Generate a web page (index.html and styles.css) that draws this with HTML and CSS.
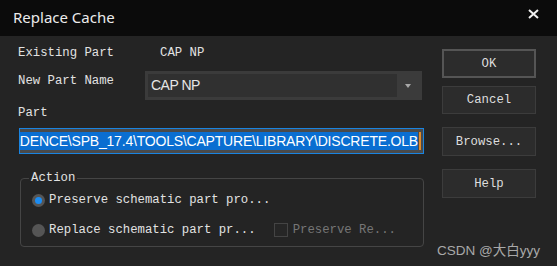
FILE: index.html
```html
<!DOCTYPE html>
<html lang="en">
<head>
    <meta charset="UTF-8">
    <title>Replace Cache</title>
    <link rel="stylesheet" href="styles.css">
</head>
<body>
    <div class="dialog">
        <!-- Barra de titulo -->
        <div class="titlebar">
            <span class="title">Replace Cache</span>
            <svg class="close" width="11" height="10" viewBox="0 0 11 10">
                <path d="M1 1 L10 9 M10 1 L1 9" stroke="#f0f0f0" stroke-width="2" fill="none"/>
            </svg>
        </div>

        <div class="content">
            <div class="main">
                <div class="row row-existing">
                    <span class="label label-existing">Existing Part</span>
                    <span class="value">CAP NP</span>
                </div>

                <div class="row row-new">
                    <span class="label label-new">New Part Name</span>
                    <div class="combo">
                        <div class="combo-field">CAP NP</div>
                        <div class="combo-arrow"><span class="arrow"></span></div>
                    </div>
                </div>

                <div class="label label-part">Part</div>
                <div class="path">
                    <span class="path-text">C:\CADENCE\SPB_17.4\TOOLS\CAPTURE\LIBRARY\DISCRETE.OLB</span>
                    <span class="caret"></span>
                </div>

                <fieldset class="group">
                    <legend>Action</legend>
                    <div class="option">
                        <span class="radio checked"></span>
                        <span>Preserve schematic part pro...</span>
                    </div>
                    <div class="option">
                        <span class="radio"></span>
                        <span>Replace schematic part pr...</span>
                        <span class="checkbox"></span>
                        <span class="disabled">Preserve Re...</span>
                    </div>
                </fieldset>
            </div>

            <div class="side">
                <button class="btn btn-ok">OK</button>
                <button class="btn btn-cancel">Cancel</button>
                <button class="btn btn-browse">Browse...</button>
                <button class="btn btn-help">Help</button>
            </div>

            <div class="watermark">CSDN @大白yyy</div>
        </div>
    </div>
</body>
</html>
```

FILE: styles.css
```css
body {
    margin: 0;
    width: 557px;
    height: 266px;
    overflow: hidden;
    background-color: #242424;
    color: #e2e2e2;
    font-family: "Liberation Mono", monospace;
    font-size: 12.3px;
}

.dialog {
    display: flex;
    flex-direction: column;
    height: 266px;
}

.titlebar {
    height: 36px;
    background-color: #0b0b0b;
    display: flex;
    align-items: center;
    justify-content: space-between;
    padding: 0 18px 0 13px;
    flex-shrink: 0;
}

.title {
    font-family: "Noto Sans", sans-serif;
    font-size: 15px;
    color: #ececec;
    margin-top: -3px;
}

.close {
    margin-top: -9px;
}

.content {
    position: relative;
    display: flex;
    padding-left: 18px;
    flex: 1;
}

.main {
    width: 406px;
}

.row {
    display: flex;
}

.label {
    line-height: 14px;
    white-space: nowrap;
}

.row-existing {
    margin-top: 10px;
    line-height: 14px;
}

.label-existing {
    width: 142px;
}

.row-new {
    margin-top: 11px;
}

.label-new {
    width: 127px;
    padding-top: 3px;
}

.combo {
    width: 271px;
    height: 23px;
    padding: 3px;
    background-color: #3b3b3b;
    display: flex;
}

.combo-field {
    flex: 1;
    background-color: #303030;
    font-family: "Liberation Sans", sans-serif;
    font-size: 14px;
    letter-spacing: -0.5px;
    line-height: 23px;
    padding-left: 3px;
    color: #e6e6e6;
}

.combo-arrow {
    width: 22px;
    display: flex;
    align-items: center;
    justify-content: center;
}

.arrow {
    width: 0;
    height: 0;
    border-left: 3px solid transparent;
    border-right: 3px solid transparent;
    border-top: 4px solid #a8a8a8;
    margin-top: 1px;
}

.label-part {
    margin-top: 6px;
}

/* caminho com o texto selecionado, rolado ate o fim */
.path {
    margin: 8px 0 0 1px;
    width: 399px;
    height: 20px;
    border: 1px solid #1a84e0;
    background-color: #4a4a4a;
    padding: 2px;
    display: flex;
    justify-content: flex-end;
    align-items: center;
    overflow: hidden;
}

.path-text {
    white-space: nowrap;
    background-color: #0a6ed1;
    color: #ffffff;
    font-family: "Liberation Sans", sans-serif;
    font-size: 14px;
    letter-spacing: -0.2px;
    line-height: 18px;
}

.caret {
    flex-shrink: 0;
    width: 2px;
    height: 18px;
    background-color: #e08a2a;
    margin-left: 1px;
}

.group {
    margin: 17px 0 0 2px;
    width: 386px;
    padding: 0 8px 1px 8px;
    border: 1px solid #454545;
    border-radius: 4px;
}

.group legend {
    padding: 0 2px;
    line-height: 14px;
}

.option {
    display: flex;
    align-items: center;
    height: 30px;
    white-space: nowrap;
}

.radio {
    width: 13px;
    height: 13px;
    border-radius: 50%;
    background-color: #555555;
    margin: 0 4px 0 3px;
    display: flex;
    align-items: center;
    justify-content: center;
}

.radio.checked::after {
    content: "";
    width: 7px;
    height: 7px;
    border-radius: 50%;
    background-color: #1b8cf2;
}

.checkbox {
    width: 12px;
    height: 12px;
    border: 1px solid #444444;
    background-color: #262626;
    margin: 0 5px 0 18px;
}

.disabled {
    color: #767676;
}

.side {
    margin-left: 18px;
    width: 94px;
    padding-top: 13px;
    display: flex;
    flex-direction: column;
}

.btn {
    width: 94px;
    height: 29px;
    background-color: #2c2c2c;
    border: 1px solid #3c3c3c;
    color: #dedede;
    font-family: "Liberation Mono", monospace;
    font-size: 12.3px;
    padding: 0;
}

.btn-ok {
    border: 2px solid #555555;
}

.btn-cancel {
    margin-top: 8px;
    height: 28px;
}

.btn-browse {
    margin-top: 13px;
}

.btn-help {
    margin-top: 13px;
}

.watermark {
    position: absolute;
    left: 437px;
    top: 203px;
    font-family: "Liberation Sans", "Noto Sans CJK SC", sans-serif;
    font-size: 13.5px;
    color: #a9a9a9;
}
```
